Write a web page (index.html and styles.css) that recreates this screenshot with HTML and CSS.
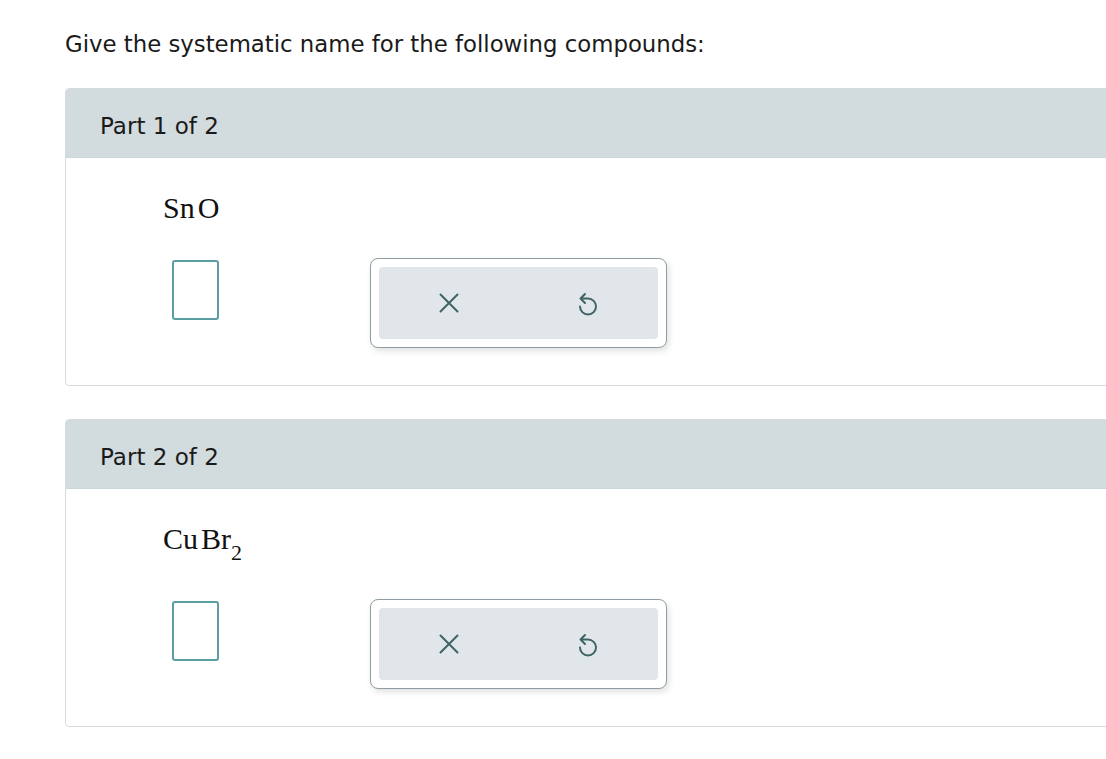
FILE: index.html
```html
<!DOCTYPE html>
<html>
<head>
<meta charset="utf-8">
<link rel="stylesheet" href="styles.css">
</head>
<body>
<div class="page">
  <p class="prompt">Give the systematic name for the following compounds:</p>

  <section class="card">
    <div class="card-head">Part 1 of 2</div>
    <div class="card-body">
      <div class="formula">Sn<span class="gap"></span>O</div>
      <div class="answer-row">
        <div class="answer-box"></div>
        <div class="tools">
          <div class="tools-inner">
            <button class="tool" aria-label="clear">
              <svg width="20" height="20" viewBox="0 0 20 20"><path d="M1.5 1.5 L18.5 18.5 M18.5 1.5 L1.5 18.5" stroke="#3f6466" stroke-width="2" fill="none" stroke-linecap="round"/></svg>
            </button>
            <button class="tool" aria-label="undo">
              <svg width="22" height="26" viewBox="0 0 22 26"><path d="M8 4 L3.5 8.5 L8 13 M3.5 8.5 H11 A8 8 0 1 1 3 16.5" stroke="#3f6466" stroke-width="2" fill="none" stroke-linecap="round" stroke-linejoin="round"/></svg>
            </button>
          </div>
        </div>
      </div>
    </div>
  </section>

  <section class="card">
    <div class="card-head">Part 2 of 2</div>
    <div class="card-body">
      <div class="formula">Cu<span class="gap"></span>Br<sub>2</sub></div>
      <div class="answer-row">
        <div class="answer-box"></div>
        <div class="tools">
          <div class="tools-inner">
            <button class="tool" aria-label="clear">
              <svg width="20" height="20" viewBox="0 0 20 20"><path d="M1.5 1.5 L18.5 18.5 M18.5 1.5 L1.5 18.5" stroke="#3f6466" stroke-width="2" fill="none" stroke-linecap="round"/></svg>
            </button>
            <button class="tool" aria-label="undo">
              <svg width="22" height="26" viewBox="0 0 22 26"><path d="M8 4 L3.5 8.5 L8 13 M3.5 8.5 H11 A8 8 0 1 1 3 16.5" stroke="#3f6466" stroke-width="2" fill="none" stroke-linecap="round" stroke-linejoin="round"/></svg>
            </button>
          </div>
        </div>
      </div>
    </div>
  </section>
</div>
</body>
</html>
```

FILE: styles.css
```css
html, body {
  margin: 0;
  padding: 0;
  background: #ffffff;
  overflow: hidden;
}
.page {
  padding-left: 65px;
  font-family: "DejaVu Sans", Verdana, sans-serif;
  color: #1a1a1a;
}
.prompt {
  margin: 0;
  padding-top: 29px;
  font-size: 22.8px;
  line-height: 30px;
}
.card {
  width: 1100px;
  margin-top: 29px;
  border: 1px solid #d9dcdd;
  border-radius: 4px;
  overflow: hidden;
}
.card + .card {
  margin-top: 33px;
}
.card-head {
  box-sizing: border-box;
  background: #d2dbde;
  height: 69px;
  padding: 5px 0 0 34px;
  display: flex;
  align-items: center;
  font-size: 23px;
  border-bottom: 1px solid #cdd6da;
}
.card-body {
  padding: 35px 0 37px 97px;
}
.formula {
  font-family: "Liberation Serif", "Times New Roman", serif;
  font-size: 30px;
  line-height: 30px;
  color: #111;
}
.formula .gap {
  display: inline-block;
  width: 3px;
}
.formula sub {
  font-size: 22px;
  line-height: 22px;
  vertical-align: -11px;
}
.answer-row {
  display: flex;
  align-items: flex-start;
  margin-top: 35px;
}
.answer-box {
  box-sizing: border-box;
  width: 47px;
  height: 60px;
  margin-left: 9px;
  margin-top: 2px;
  border: 2px solid #5b9ea1;
  border-radius: 3px;
  background: #fff;
}
.tools {
  margin-left: 151px;
  width: 279px;
  padding: 8px;
  border: 1px solid #8d9ea2;
  border-radius: 8px;
  background: #fff;
  box-shadow: 2px 3px 6px rgba(0, 0, 0, 0.12);
}
.tools-inner {
  display: flex;
  height: 72px;
  background: #e0e6e9;
  border-radius: 4px;
}
.tool {
  flex: 1;
  border: 0;
  background: transparent;
  display: flex;
  align-items: center;
  justify-content: center;
  padding: 0;
  cursor: pointer;
}
```
